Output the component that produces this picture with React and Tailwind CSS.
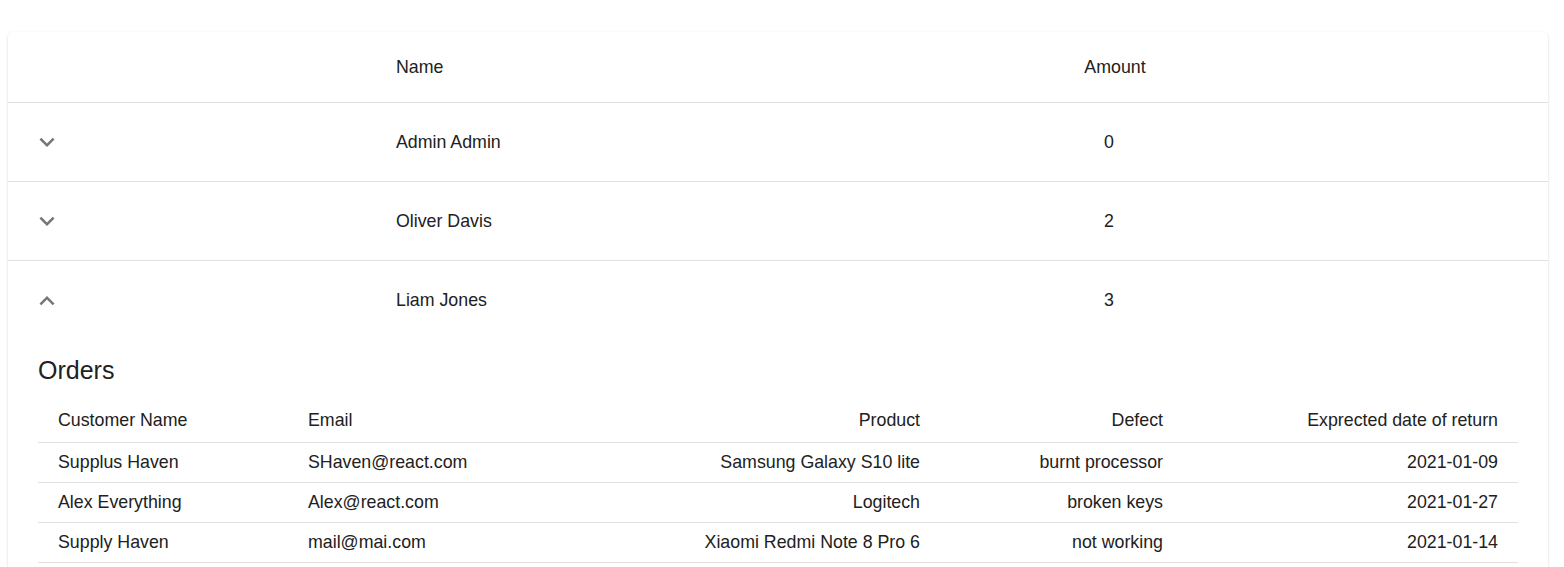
const users = [
  { name: 'Admin Admin', amount: 0, open: false },
  { name: 'Oliver Davis', amount: 2, open: false },
  { name: 'Liam Jones', amount: 3, open: true },
];

const orders = [
  { customer: 'Supplus Haven', email: 'SHaven@react.com', product: 'Samsung Galaxy S10 lite', defect: 'burnt processor', date: '2021-01-09' },
  { customer: 'Alex Everything', email: 'Alex@react.com', product: 'Logitech', defect: 'broken keys', date: '2021-01-27' },
  { customer: 'Supply Haven', email: 'mail@mai.com', product: 'Xiaomi Redmi Note 8 Pro 6', defect: 'not working', date: '2021-01-14' },
];

const ChevronDown = () => (
  <svg viewBox="0 0 24 24" className="w-[30px] h-[30px] fill-[#757575]">
    <path d="M7.41 8.59L12 13.17l4.59-4.58L18 10l-6 6-6-6 1.41-1.41z" />
  </svg>
);

const ChevronUp = () => (
  <svg viewBox="0 0 24 24" className="w-[30px] h-[30px] fill-[#757575]">
    <path d="M7.41 15.41L12 10.83l4.59 4.58L18 14l-6-6-6 6z" />
  </svg>
);

const subGrid = 'grid grid-cols-[250px_326px_326px_243px_1fr]';

const OrdersTable = () => (
  <div className="px-[30px] pb-10">
    <h2 className="text-[25px] leading-[32px] pt-[14px] text-[#212121]">Orders</h2>
    <div className={`${subGrid} h-[57px] pt-[12px] items-center border-b border-[#e0e0e0]`}>
      <div className="px-5">Customer Name</div>
      <div className="px-5">Email</div>
      <div className="px-5 text-right">Product</div>
      <div className="px-5 text-right">Defect</div>
      <div className="px-5 text-right">Exprected date of return</div>
    </div>
    {orders.map((o) => (
      <div key={o.customer} className={`${subGrid} h-[40px] items-center border-b border-[#e0e0e0]`}>
        <div className="px-5">{o.customer}</div>
        <div className="px-5">{o.email}</div>
        <div className="px-5 text-right">{o.product}</div>
        <div className="px-5 text-right">{o.defect}</div>
        <div className="px-5 text-right">{o.date}</div>
      </div>
    ))}
  </div>
);

export default function App() {
  return (
    <div className="min-h-screen bg-white pl-2 pr-4 pt-8 text-[17.8px] text-[#212121] font-['Liberation_Sans',Arial,sans-serif]">
      <div className="rounded-[5px] bg-white shadow-[0_2px_1px_-1px_rgba(0,0,0,0.2),0_1px_1px_0_rgba(0,0,0,0.14),0_1px_3px_0_rgba(0,0,0,0.12)]">
        <div className="grid grid-cols-[368px_306px_1fr] h-[71px] items-center border-b border-[#e0e0e0]">
          <div />
          <div className="px-5">Name</div>
          <div className="text-center">Amount</div>
        </div>
        {users.map((u, i) => (
          <div key={u.name}>
            <div
              className={`grid grid-cols-[368px_306px_1fr] h-[79px] items-center ${
                i < users.length - 1 ? 'border-b border-[#e0e0e0]' : ''
              }`}
            >
              <div className="pl-6 flex items-center">{u.open ? <ChevronUp /> : <ChevronDown />}</div>
              <div className="px-5">{u.name}</div>
              <div className="text-center pr-3">{u.amount}</div>
            </div>
            {u.open && <OrdersTable />}
          </div>
        ))}
      </div>
    </div>
  );
}
